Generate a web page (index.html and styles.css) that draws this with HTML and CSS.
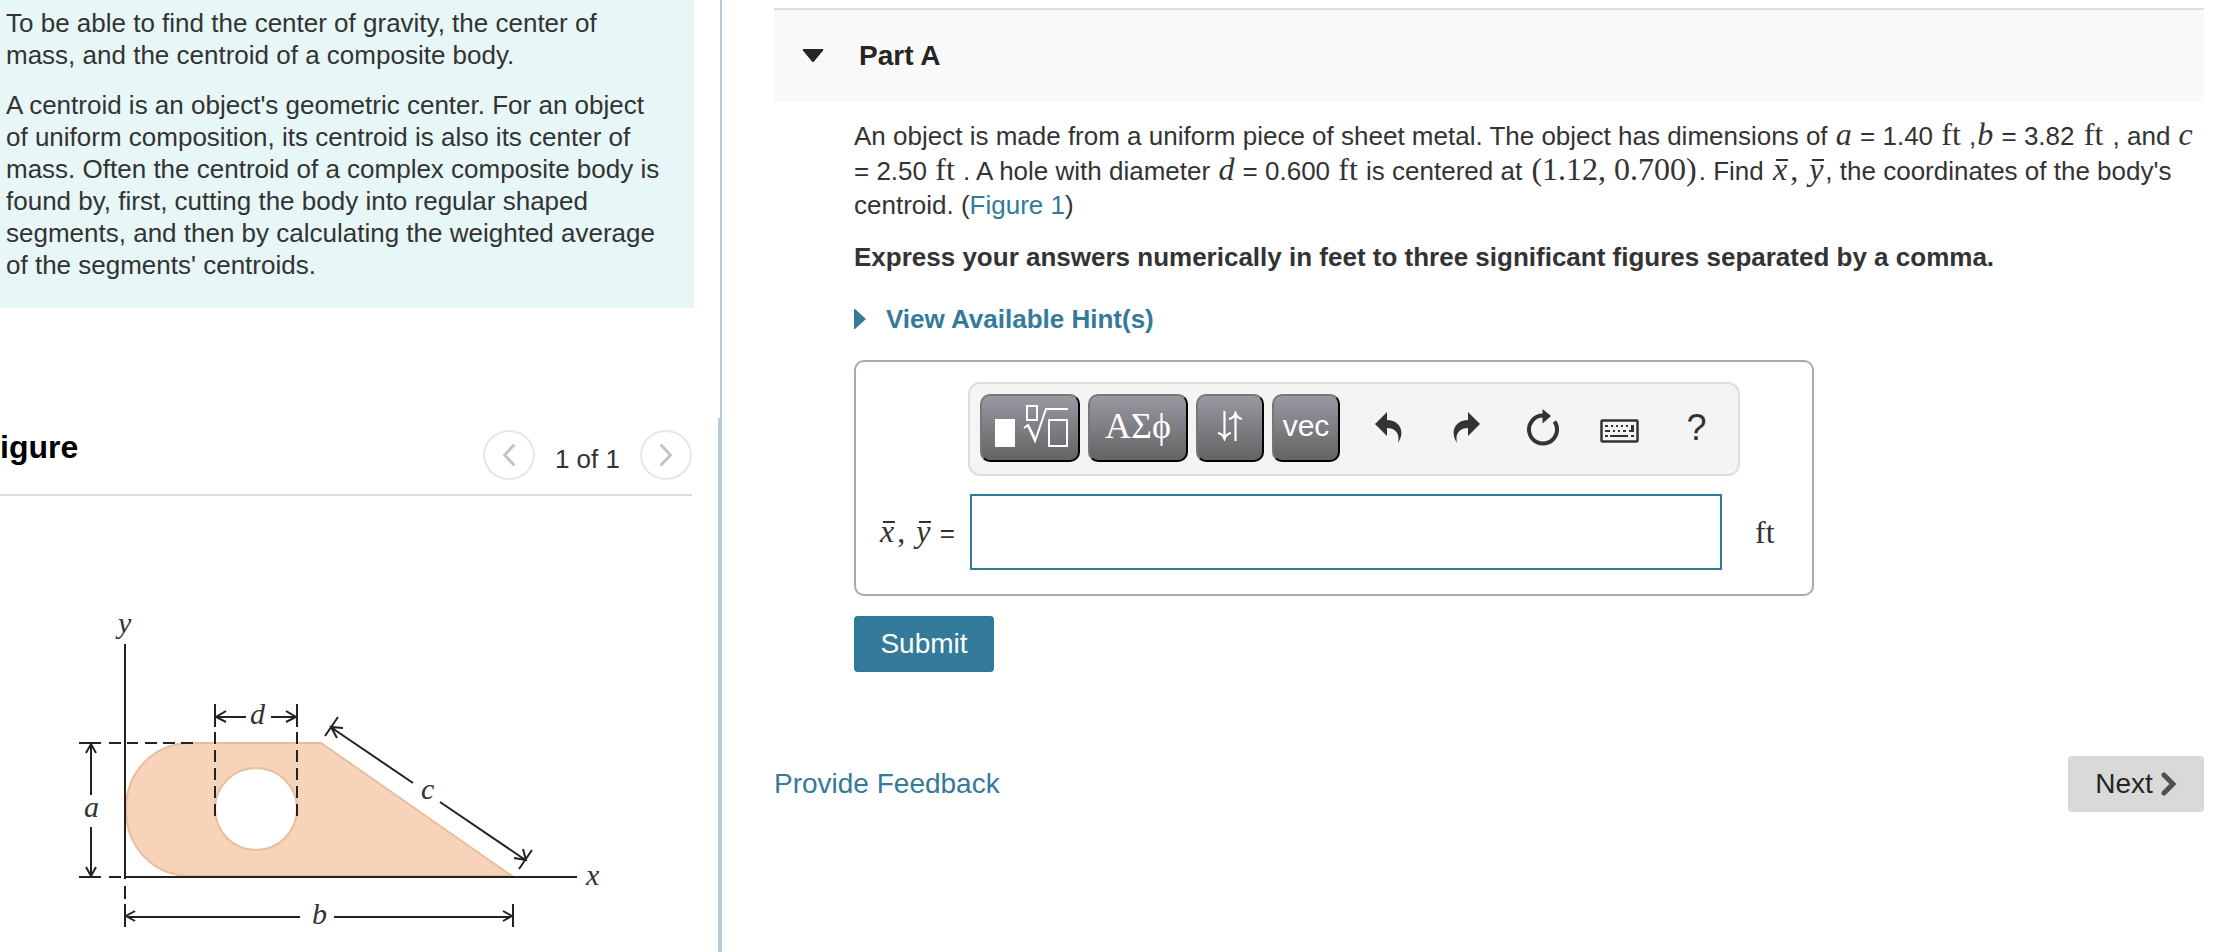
FILE: index.html
```
<!DOCTYPE html>
<html lang="en">
<head>
<meta charset="utf-8">
<title>Center of Gravity and Centroid</title>
<link rel="stylesheet" href="styles.css">
</head>
<body>
<div class="layout">
  <aside class="side">
    <section class="intro">
      <p>To be able to find the center of gravity, the center of mass, and the centroid of a composite body.</p>
      <p>A centroid is an object's geometric center. For an object of uniform composition, its centroid is also its center of mass. Often the centroid of a complex composite body is found by, first, cutting the body into regular shaped segments, and then by calculating the weighted average of the segments' centroids.</p>
    </section>
    <header class="figure-head">
      <h2>igure</h2>
      <nav class="pager">
        <button class="round" aria-label="Previous figure"><svg width="12" height="22" viewBox="0 0 12 22"><path d="M10.500 1.500L1.500 11l9 9.500"/></svg></button>
        <span>1 of 1</span>
        <button class="round" aria-label="Next figure"><svg width="12" height="22" viewBox="0 0 12 22"><path d="M1.500 1.500L10.500 11l-9 9.500"/></svg></button>
      </nav>
    </header>
    <svg class="diagram" width="620" height="352" viewBox="0 600 620 352">
      <path class="metal" d="M192 743H321L512 876H192C152 876 126 846 126 809.500S152 743 192 743Z"/>
      <ellipse class="hole" cx="256" cy="809" rx="41" ry="41"/>
      <g class="ink">
        <path d="M125 644V877H577M125 877V879M125 886v13M125 904v23M513 904v23"/>
        <path d="M79 743h22M109 743h12M127 743h11M145 743h12M163 743h12M181 743h12M79 877h22M109 877h12"/>
        <path d="M91 744V795M91 827V875M86 753l5-9 5 9M86 867l5 9 5-9"/>
        <path d="M127 917H300M334 917H511M135 911l-9 5 9 5M503 911l9 5-9 5"/>
        <path d="M215 704V727M297 704V727M215 732v12M215 750v12M215 768v12M215 786v12M215 804v12M297 732v12M297 750v12M297 768v12M297 786v12M297 804v12"/>
        <path d="M217 717H246M271 717H295M226 711l-10 6 10 5M286 711l10 6-10 5"/>
        <path d="M332 728L413 783M440 802L524 859M325 736l13-19M519 869l13-19M343 728l-12-1 6 11M523 849l3 11-12-2"/>
      </g>
      <g class="marks">
        <text x="118" y="633">y</text>
        <text x="84" y="817">a</text>
        <text x="250" y="724">d</text>
        <text x="421" y="799">c</text>
        <text x="312" y="924">b</text>
        <text x="586" y="885">x</text>
      </g>
    </svg>
  </aside>
  <div class="divider"></div>
  <main class="main">
    <header class="part-head">
      <svg width="22" height="14" viewBox="0 0 22 14"><path d="M1.500 0h19q1.500 0 .6 1.500L12 12.500q-1 1-2 0L.9 1.500Q0 0 1.500 0z" fill="#252525"/></svg>
      <h1>Part A</h1>
    </header>
    <div class="part-body">
      <p class="problem">An object is made from a uniform piece of sheet metal. The object has dimensions of <i class="math">a</i> = 1.40 <span class="math">ft</span> ,<i class="math">b</i> = 3.82 <span class="math word">ft</span> , and <i class="math">c</i><br>= 2.50 <span class="math">ft</span> . A hole with diameter <i class="math">d</i> = 0.600 <span class="math">ft</span> is centered at <span class="math word">(1.12, 0.700)</span>. Find <i class="math bar">x</i><span class="math">, </span><i class="math bar">y</i>, the coordinates of the body's<br>centroid. (<a href="#">Figure 1</a>)</p>
      <p class="ask">Express your answers numerically in feet to three significant figures separated by a comma.</p>
      <a class="hints" href="#"><svg width="12" height="20" viewBox="0 0 12 20"><path d="M0 0h1L12 10 1 20H0z" fill="#347a9a"/></svg>View Available Hint(s)</a>
      <form class="answer">
        <div class="toolbar">
          <button type="button" class="key wide" aria-label="Templates"><svg width="76" height="44" viewBox="0 0 76 44"><path d="M3 15h20v28H3z" fill="#fff"/><path d="M35 2h10v14H35zM57 16h18v26H57z" fill="none" stroke="#fff" stroke-width="2"/><path d="M32 24l4-3 7 16L54 5h22" fill="none" stroke="#fff" stroke-width="2"/><path d="M35 22l2-1 6 11v6z" fill="#fff"/></svg></button>
          <button type="button" class="key wide greek">ΑΣϕ</button>
          <button type="button" class="key" aria-label="Arrows"><svg width="26" height="30" viewBox="0 0 26 30"><path d="M7.500 0v28M1 22q5 1 6.500 6Q9 23 14 22M18.500 30V2M12 8q5-1 6.500-6Q20 7 25 8" fill="none" stroke="#fff" stroke-width="2.200"/></svg></button>
          <button type="button" class="key">vec</button>
          <div class="tools">
            <button type="button" class="tool" aria-label="Undo"><svg width="28" height="32" viewBox="0 0 28 32"><path d="M12 0v8c12 0 19 11 11 23 2-9-2-15-11-15v8L0 12z"/></svg></button>
            <button type="button" class="tool" aria-label="Redo"><svg width="28" height="32" viewBox="0 0 28 32"><path d="M16 0v8C4 8-3 19 5 31 3 22 7 16 16 16v8l12-12z"/></svg></button>
            <button type="button" class="tool" aria-label="Reset"><svg width="32" height="38" viewBox="0 0 32 38"><path d="M16 6.500A14 14 0 1 0 27.500 12.500" fill="none" stroke="#333" stroke-width="4"/><path d="M15.500 0L24 7l-8.500 7.500z"/></svg></button>
            <button type="button" class="tool low" aria-label="Keyboard"><svg width="40" height="24" viewBox="0 0 40 24"><rect x="1.500" y="1.500" width="36" height="21" rx="1" fill="none" stroke="#333" stroke-width="2.500"/><path d="M5 6h3v2H5zM11 6h2v2h-2zM16 6h2v2h-2zM21 6h2v2h-2zM26 6h2v2h-2zM31 6h3v7h-5v-2h2zM5 11h5v2H5zM13 11h2v2h-2zM18 11h2v2h-2zM23 11h3v2h-3zM5 16h3v2H5zM10 16h18v2H10zM31 16h3v2h-3z"/></svg></button>
            <button type="button" class="tool" aria-label="Help">?</button>
          </div>
        </div>
        <label class="lhs" for="ans"><i class="math bar">x</i><span class="math">, </span><i class="math bar">y</i> =</label>
        <input id="ans" class="field" type="text">
        <span class="unit math">ft</span>
      </form>
      <button class="submit">Submit</button>
    </div>
    <footer class="foot">
      <a href="#">Provide Feedback</a>
      <button class="next">Next <svg width="16" height="24" viewBox="0 0 16 24"><path d="M3 3l9 9-9 9" fill="none" stroke="#505050" stroke-width="5" stroke-linecap="round"/></svg></button>
    </footer>
  </main>
</div>
</body>
</html>
```
FILE: styles.css
```
* { box-sizing: border-box; }
body {
  margin: 0;
  background: #fff;
  color: #333;
  font: 26px/32px "Liberation Sans", Arial, sans-serif;
  overflow: hidden;
}
p, h1, h2 { margin: 0; }
a { color: #347a9a; text-decoration: none; }
button { font: inherit; color: inherit; margin: 0; padding: 0; border: 0; background: none; }
svg { display: block; flex: none; }

.layout { display: grid; grid-template-columns: 718px 4px minmax(0, 1fr); min-height: 100vh; }

.intro {
  display: flex;
  flex-direction: column;
  gap: 18px;
  margin-right: 24px;
  padding: 7px 24px 27px 6px;
  background: #e7f6f6;
}
.figure-head {
  display: flex;
  align-items: center;
  justify-content: space-between;
  margin: 122px 26px 0 0;
  padding-bottom: 14px;
  border-bottom: 2px solid #ddd;
}
.figure-head h2 { font-size: 32px; line-height: 34px; color: #000; padding-bottom: 16px; }
.pager { display: flex; align-items: center; gap: 20px; }
.pager span { padding-top: 8px; }
.round {
  display: grid;
  place-items: center;
  width: 52px;
  height: 50px;
  border: 2px solid #e6e6e6;
  border-radius: 50%;
}
.round path { fill: none; stroke: #c4c4c4; stroke-width: 3; stroke-linecap: round; }

.diagram { margin-top: 104px; }
.metal { fill: #f7d4b9; stroke: #e8bd9b; stroke-width: 2; }
.hole { fill: #fff; stroke: #e8bd9b; stroke-width: 2; }
.ink path { fill: none; stroke: #222; stroke-width: 2; }
.marks { font: italic 30px "Liberation Serif", "Times New Roman", serif; fill: #333; }

.divider {
  background: linear-gradient(#b9cadb, #b9cadb) right top / 2px 418px no-repeat,
              linear-gradient(#b9cadb, #b9cadb) 0 418px / 4px 100% no-repeat;
}

.main { padding: 8px 14px 0 52px; }
.part-head {
  display: flex;
  align-items: center;
  gap: 35px;
  height: 94px;
  padding-left: 28px;
  border-top: 2px solid #ddd;
  background: #f9f9f9;
}
.part-head h1 { font-size: 28px; line-height: 32px; color: #252525; }
.part-body { display: flex; flex-direction: column; align-items: flex-start; padding: 16px 0 0 80px; }
.problem { line-height: 34px; white-space: nowrap; }
.math { margin: 0 1px; font-family: "Liberation Serif", "Times New Roman", serif; font-size: 32px; line-height: 32px; }
.word { margin: 0 2px; }
.bar { position: relative; margin: 0 2px; }
.bar::before { content: ""; position: absolute; left: 3px; top: 8px; width: 12px; height: 2px; background: #333; }
.ask { margin-top: 19px; font-weight: bold; }
.hints { display: flex; align-items: center; gap: 20px; margin-top: 30px; font-weight: bold; }

.answer {
  display: grid;
  grid-template-columns: 92px 752px 1fr;
  grid-template-rows: 94px 76px;
  row-gap: 18px;
  column-gap: 0;
  width: 960px;
  margin-top: 25px;
  padding: 20px 32px 24px 22px;
  border: 2px solid #aaa;
  border-radius: 10px;
}
.toolbar {
  grid-column: 2 / 4;
  display: flex;
  gap: 8px;
  width: 772px;
  margin-left: -2px;
  padding: 10px;
  border: 2px solid #ddd;
  border-radius: 12px;
  background: #f4f4f4;
}
.key {
  flex: none;
  display: grid;
  place-items: center;
  width: 68px;
  height: 68px;
  padding-bottom: 4px;
  border: 2px outset #777;
  border-color: #777 #222 #222 #777;
  border-radius: 10px;
  background: linear-gradient(#9a98a2, #636363);
  color: #fff;
  font-size: 30px;
}
.wide { width: 100px; }
.greek { font-family: "Liberation Serif", "Times New Roman", serif; font-size: 36px; }
.tools { flex: 1; display: flex; gap: 8px; margin-left: 6px; }
.tool { flex: none; display: grid; place-items: center; width: 69px; height: 68px; font-size: 36px; fill: #333; }
.low { padding-top: 6px; }
.lhs { align-self: center; }
.field { width: 752px; height: 76px; border: 2px solid #347a9a; background: #fff; font: inherit; padding: 0 12px; }
.unit { align-self: center; padding-left: 32px; }
.submit {
  width: 140px;
  height: 56px;
  margin-top: 20px;
  border-radius: 4px;
  background: #347a9a;
  color: #fff;
  font-size: 28px;
}
.foot { display: flex; align-items: center; justify-content: space-between; margin-top: 84px; font-size: 28px; }
.next {
  display: flex;
  align-items: center;
  justify-content: center;
  gap: 8px;
  width: 136px;
  height: 56px;
  border-radius: 4px;
  background: #d9d9d9;
  color: #252525;
}
```
